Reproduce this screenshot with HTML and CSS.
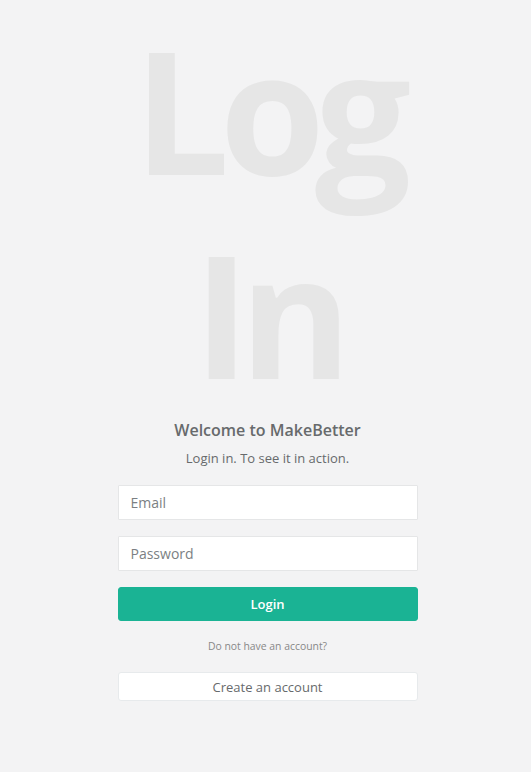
FILE: index.html
```html
<!DOCTYPE html>
<html lang="en">
<head>
<meta charset="utf-8">
<title>Login</title>
<link rel="stylesheet" href="styles.css">
</head>
<body>
<div class="middle-box">
  <h1 class="logo-name">Log In</h1>
  <h3 class="title">Welcome to MakeBetter</h3>
  <p class="subtitle">Login in. To see it in action.</p>
  <form class="form">
    <input class="form-control" type="email" placeholder="Email">
    <input class="form-control" type="password" placeholder="Password">
    <button class="btn-primary" type="button">Login</button>
    <p class="muted">Do not have an account?</p>
    <button class="btn-white" type="button">Create an account</button>
  </form>
</div>
</body>
</html>
```
FILE: styles.css
```css
html, body {
  margin: 0;
  padding: 0;
  background: #f3f3f4;
}
body {
  font-family: "Open Sans", "Liberation Sans", sans-serif;
  font-size: 13px;
  color: #676a6c;
}
.middle-box {
  width: 300px;
  margin: 0 auto;
  padding-top: 7px;
  text-align: center;
  transform: translateX(2px);
}
.logo-name {
  margin: 0;
  color: #e6e6e6;
  font-size: 170px;
  font-weight: 700;
  letter-spacing: -10px;
  line-height: 204px;
}
.title {
  margin: 4px 0 0;
  font-size: 16px;
  font-weight: 600;
  line-height: 22px;
  color: #676a6c;
}
.subtitle {
  margin: 8px 0 0;
  font-size: 13px;
  line-height: 18px;
}
.form {
  display: flex;
  flex-direction: column;
  margin-top: 18px;
}
.form-control {
  box-sizing: border-box;
  height: 35px;
  margin: 0 0 16px;
  padding: 6px 12px;
  border: 1px solid #e5e6e7;
  border-radius: 1px;
  background: #fff;
  font-family: inherit;
  font-size: 14px;
  color: #676a6c;
  outline: none;
}
.form-control::placeholder {
  color: #7b7f83;
}
.btn-primary {
  box-sizing: border-box;
  height: 34px;
  border: 1px solid #1ab394;
  border-radius: 3px;
  background: #1ab394;
  color: #fff;
  font-family: inherit;
  font-size: 13px;
  font-weight: 600;
}
.muted {
  margin: 18px 0 19px;
  font-size: 10.4px;
  line-height: 14px;
  color: #888;
}
.btn-white {
  box-sizing: border-box;
  height: 29px;
  border: 1px solid #e7eaec;
  border-radius: 3px;
  background: #fff;
  color: inherit;
  font-family: inherit;
  font-size: 13px;
}
```
